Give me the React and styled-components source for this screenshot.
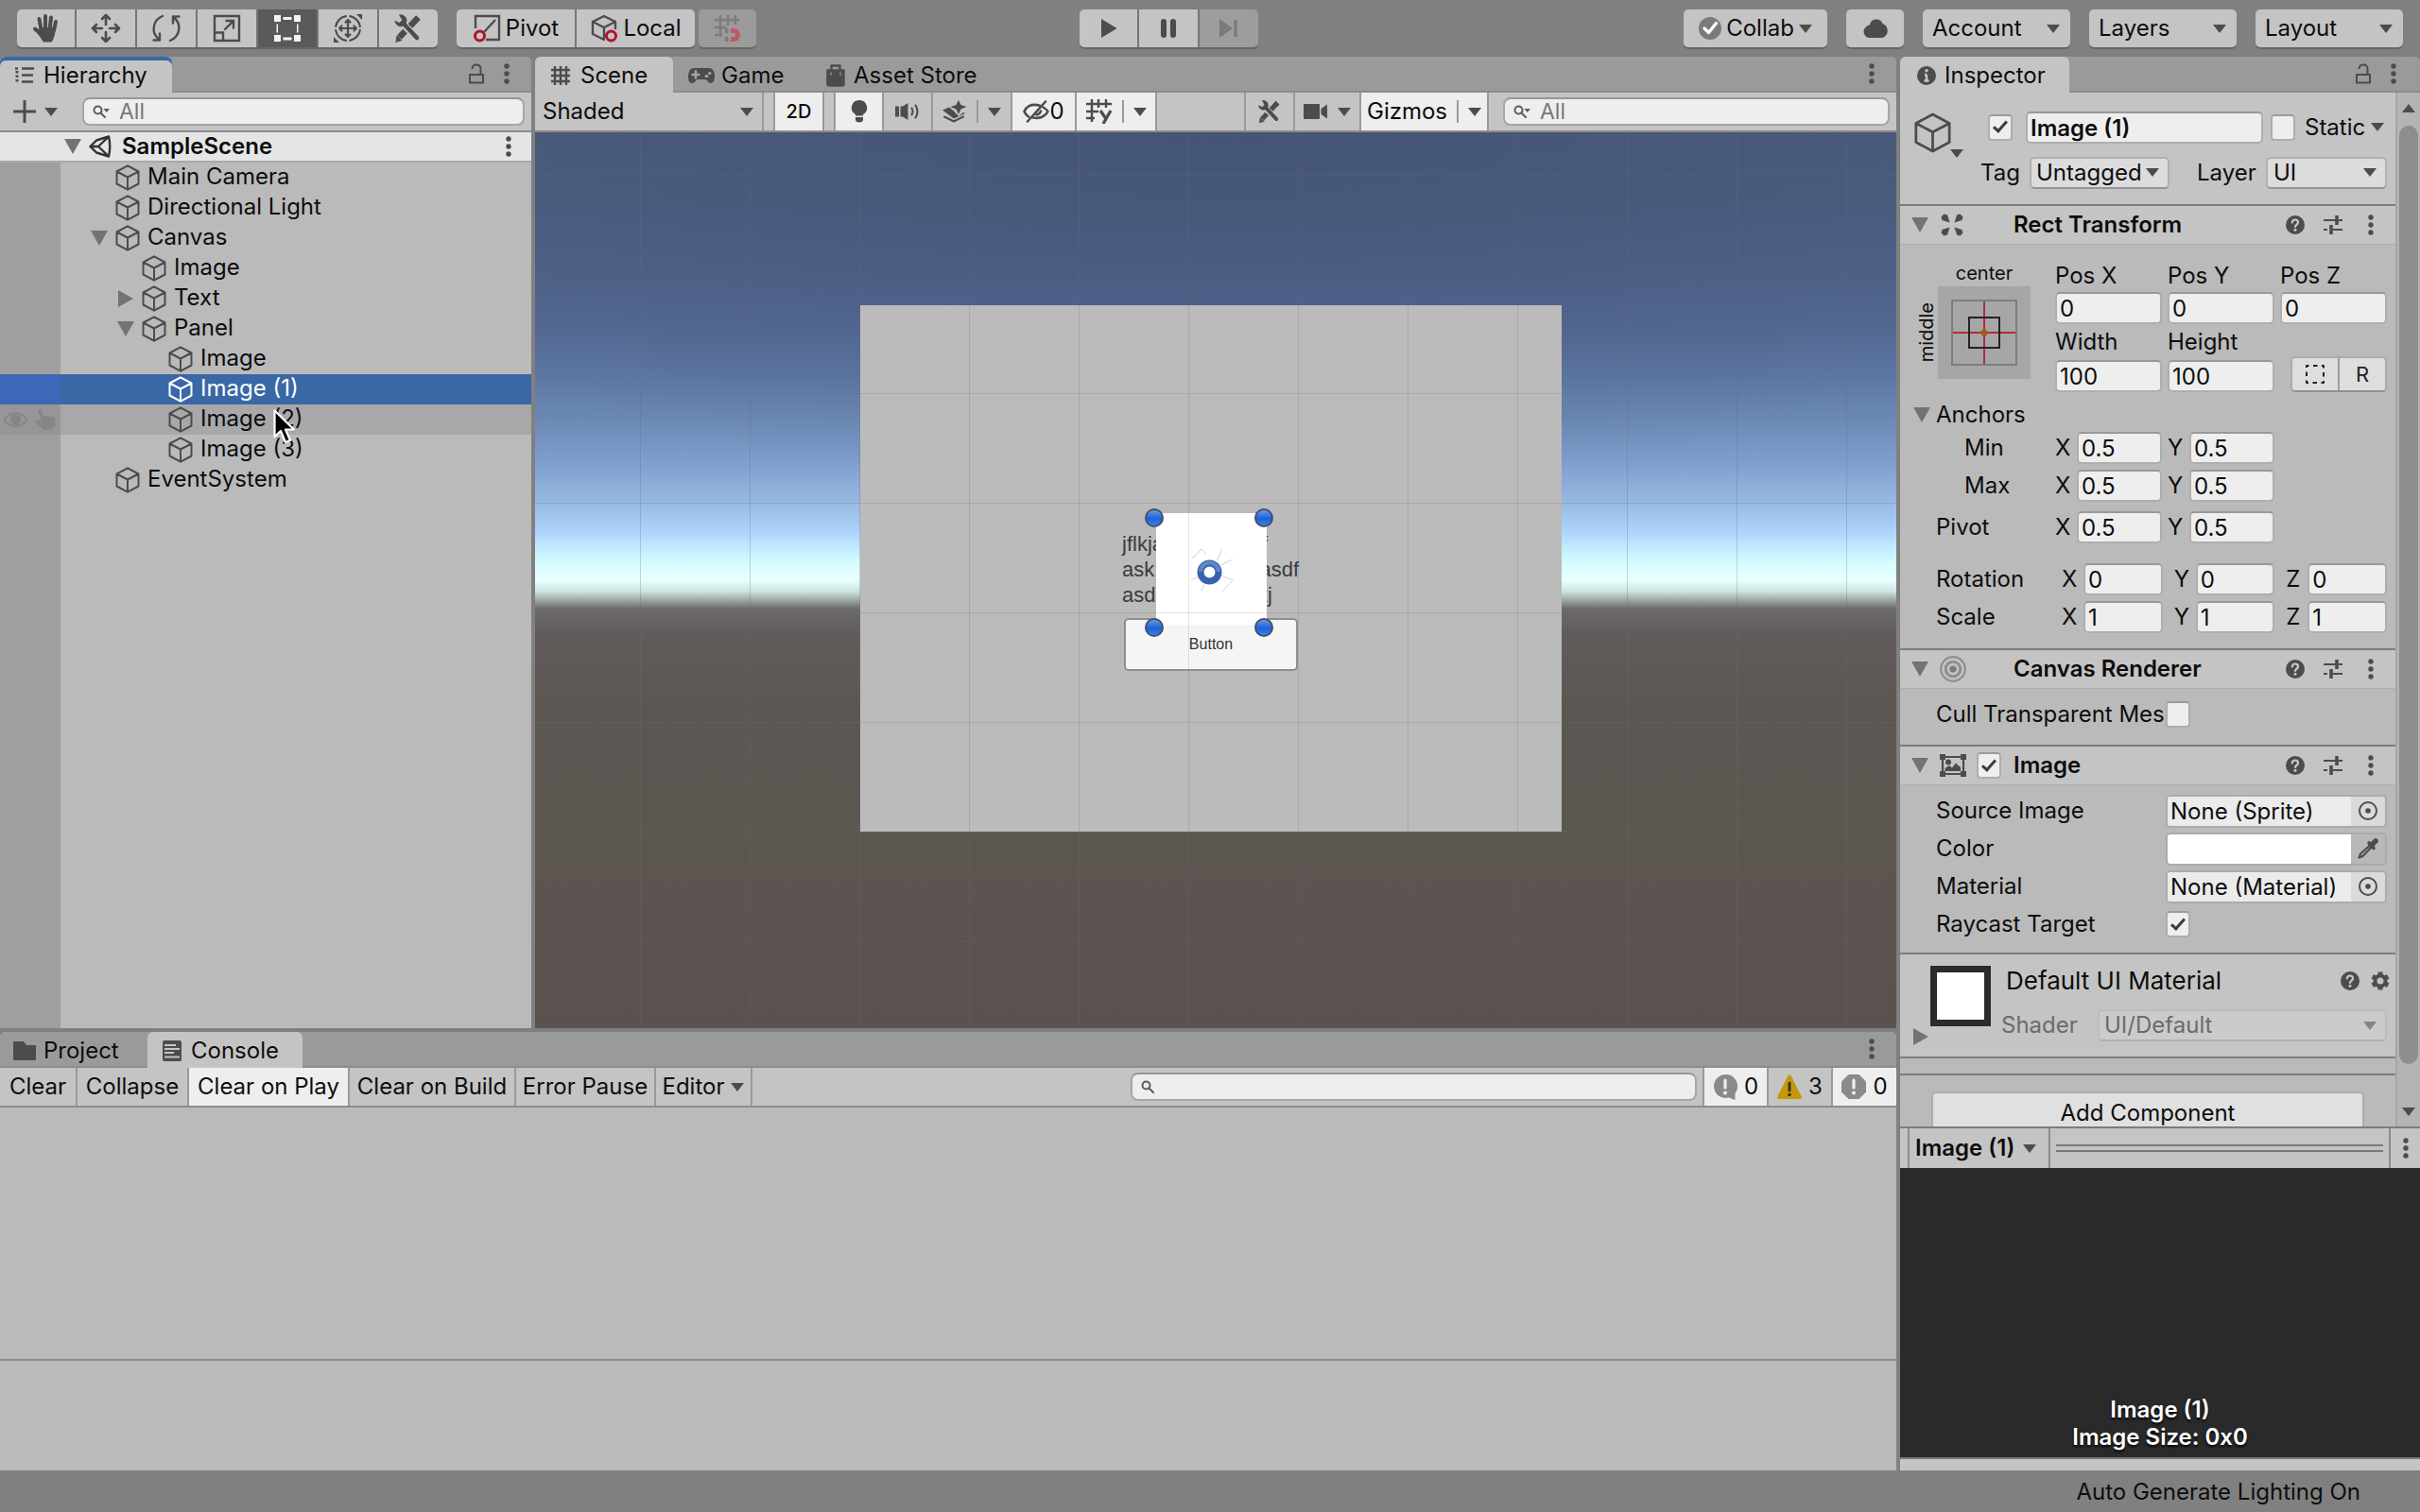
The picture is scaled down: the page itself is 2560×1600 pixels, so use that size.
import React from "react";
import styled, { createGlobalStyle, css } from "styled-components";

const c = {
  frame: "#808080",
  bar: "#c4c4c4",
  body: "#bababa",
  tabs: "#9a9a9a",
  line: "#8c8c8c",
  rule: "#7d7d7d",
  field: "#eeeeee",
  icon: "#4c4c4c",
  text: "#0d0d0d",
  blue: "#3a67a6",
  red: "#b5122c",
};

const GlobalStyle = createGlobalStyle`
  *, *::before, *::after { box-sizing: border-box; }
  body { margin: 0; background: ${c.frame}; }
  body, button, input, select {
    font-family: Inter, "Liberation Sans", sans-serif;
    font-size: 24px;
    line-height: 30px;
    color: ${c.text};
  }
  button, input, select { margin: 0; padding: 0; border: 0; background: none; border-radius: 0; }
  svg { display: block; flex: none; }
`;

/* ---------- icons ---------- */

const Glyph = ({ w, h, children, color = c.icon, sw = 2.4, vb }) => (
  <svg
    width={w}
    height={h}
    viewBox={vb || `0 0 ${w} ${h}`}
    fill="none"
    stroke={color}
    strokeWidth={sw}
    strokeLinecap="round"
    strokeLinejoin="round"
    aria-hidden="true"
  >
    {children}
  </svg>
);

const Down = ({ w = 14, h = 9, color = c.icon }) => (
  <Glyph w={w} h={h} vb="0 0 14 9" sw="0">
    <path d="M0 0H14L7 9Z" fill={color} />
  </Glyph>
);
const Up = () => (
  <Glyph w={14} h={9} sw="0">
    <path d="M0 9H14L7 0Z" fill={c.icon} />
  </Glyph>
);
const FoldOpen = () => (
  <Glyph w={18} h={16} sw="0">
    <path d="M0 0H18L9 16Z" fill="#737373" />
  </Glyph>
);
const FoldClosed = () => (
  <Glyph w={16} h={18} sw="0">
    <path d="M0 0V18L16 9Z" fill="#737373" />
  </Glyph>
);
const Dots = () => (
  <Glyph w={6} h={22} sw="0">
    {[3, 11, 19].map((y) => (
      <circle key={y} cx="3" cy={y} r="2.7" fill={c.icon} />
    ))}
  </Glyph>
);
const Cube = ({ w = 26, h = 28, color = c.icon, sw = 2 }) => (
  <Glyph w={w} h={h} vb="0 0 26 28" color={color} sw={sw}>
    <path d="M13 1.3L24.5 7.5V20.5L13 26.7L1.500 20.5V7.500ZM1.500 7.500L13 13.500L24.500 7.500M13 13.500V26.700" />
  </Glyph>
);
const Lock = () => (
  <Glyph w={18} h={22} sw="2">
    <path d="M2 12H16V20.500H2Z" strokeLinejoin="miter" />
    <path d="M4.500 6V5.500Q5 1.500 9 1.500Q13.500 1.500 13.500 6V12" strokeLinecap="butt" />
  </Glyph>
);
const HandTool = () => (
  <Glyph w={30} h={32} sw="4">
    <path d="M9.500 17L7.500 6M14 15V3M18.800 15L20 4.500M23 18L25 9M8 21L3 16.500" />
    <path d="M8 16L24 15.500C24.500 22 22.500 26 20.500 30H12C10 26.500 7 23 5.500 20Z" fill={c.icon} strokeWidth="1" />
  </Glyph>
);
const MoveTool = () => (
  <Glyph w={32} h={32} sw="2.600">
    <path d="M16 12V2M12 6L16 2L20 6M16 20V30M12 26L16 30L20 26M12 16H2M6 12L2 16L6 20M20 16H30M26 12L30 16L26 20" />
  </Glyph>
);
const RotateTool = () => (
  <Glyph w={32} h={32} sw="2.400">
    <path d="M12 3C2 7 -1 20 8 27.500M2.500 28.500H9V21.500M20 29C30 25 33 12 24 4.500M29.500 3.500H23V10.500" />
  </Glyph>
);
const ScaleTool = () => (
  <Glyph w={30} h={30} sw="2.400">
    <path d="M2 2H28V28H2ZM2 19.500H11V28M13 16L21.500 7.500M14.500 7H22V14.500" strokeLinejoin="miter" />
  </Glyph>
);
const RectTool = () => (
  <Glyph w={30} h={30} color="#f4f4f4" sw="0">
    <path d="M1 1H8V8H1ZM22 1H29V8H22ZM1 22H8V29H1ZM22 22H29V29H22ZM10.500 3H19.500V6H10.500ZM10.500 24.500H19.500V27.500H10.500ZM3.500 10.500H5V19.500H3.500ZM25 10.500H26.500V19.500H25Z" fill="#f4f4f4" />
  </Glyph>
);
const TransformTool = () => (
  <Glyph w={34} h={34} sw="2.200">
    <circle cx="17" cy="17" r="13" strokeDasharray="16 4.400" strokeDashoffset="-2" />
    <path d="M17 8V26M14.500 10.500L17 8L19.500 10.500M14.500 23.500L17 26L19.500 23.500M8 17H26M10.500 14.500L8 17L10.500 19.500M23.500 14.500L26 17L23.500 19.500" />
    <path d="M26 2H32V8ZM2 26V32H8Z" fill={c.icon} strokeWidth="0" />
  </Glyph>
);
const ToolsIcon = ({ s = 32 }) => (
  <Glyph w={s} h={s} vb="0 0 32 32" sw="4">
    <path d="M10.500 10.500L25 26" strokeWidth="4.600" />
    <path d="M7 1.800A6 6 0 1 1 2 8.500L6.500 10.500L9.500 7.500Z" fill={c.icon} strokeWidth="1" />
    <path d="M26.500 4.500L18 13.500M12.500 19L6.500 25.500" strokeWidth="6.500" strokeLinecap="butt" />
    <path d="M3 30L4 24L8.500 28.500Z" fill={c.icon} strokeWidth="1" />
  </Glyph>
);
const PivotIcon = () => (
  <Glyph w={30} h={30}>
    <path d="M3 15V2H28V27H14M12 19L24 6" strokeLinecap="butt" strokeLinejoin="miter" />
    <circle cx="7.500" cy="23" r="5" stroke={c.red} strokeWidth="3" />
  </Glyph>
);
const LocalIcon = () => (
  <Glyph w={30} h={30}>
    <path d="M15 27L3 21V8L15 2L27 8V15M3 8L15 14L27 8M15 14V26" />
    <circle cx="22.500" cy="23" r="5" stroke={c.red} strokeWidth="3" />
  </Glyph>
);
const SnapIcon = () => (
  <Glyph w={30} h={30} color="#7c7c7c">
    <path d="M7 1V24M15 1V12M23 1V11M1 6H27M1 14H13M1 22H9" strokeLinecap="butt" />
    <path d="M18 17.500H21A4.500 4.500 0 0 1 21 26.500H18" stroke="#c25964" strokeWidth="5" strokeLinecap="butt" />
    <path d="M12 17.500H15.500M12 26.500H15.500" strokeWidth="5" strokeLinecap="butt" />
  </Glyph>
);
const PlayIcon = () => (
  <Glyph w={18} h={20} sw="0">
    <path d="M1 0L17.500 10L1 20Z" fill={c.icon} />
  </Glyph>
);
const PauseIcon = () => (
  <Glyph w={18} h={20} sw="6">
    <path d="M4 3V17M14 3V17" />
  </Glyph>
);
const StepIcon = () => (
  <Glyph w={20} h={20} color="#7b7b7b" sw="3.500">
    <path d="M0 0L14 10L0 20Z" fill="#7b7b7b" strokeWidth="0" />
    <path d="M17 1V19" strokeLinecap="butt" />
  </Glyph>
);
const CollabIcon = () => (
  <Glyph w={24} h={24} sw="0">
    <circle cx="12" cy="12" r="12" fill="#7a7a7a" />
    <path d="M6 12L10.500 16.500L18.500 6.500" stroke="#fff" strokeWidth="3.400" />
  </Glyph>
);
const CloudIcon = () => (
  <Glyph w={28} h={22} sw="0">
    <path d="M7 21A6.500 6.500 0 0 1 4 9.500A5 5 0 0 1 8 7.500A7 7 0 0 1 21.500 6A8 8 0 0 1 21.500 21Z" fill={c.icon} />
  </Glyph>
);
const HierarchyIcon = () => (
  <Glyph w={22} h={18} sw="2.400">
    <path d="M1 1.500H4M8 1.500H21M8 8.500H20M8 15.500H20" strokeLinecap="butt" />
    <path d="M3 4V17" strokeDasharray="2.500 2" strokeLinecap="butt" strokeWidth="3" />
  </Glyph>
);
const SceneIcon = () => (
  <Glyph w={22} h={22} sw="2.400">
    <path d="M5 1V21M11 1V21M17 1V21M1 5H21M1 11H21M1 17H21" strokeLinecap="butt" />
  </Glyph>
);
const GameIcon = () => (
  <Glyph w={28} h={16} sw="0">
    <path d="M6 0H22C26 0 28 4 28 9C28 14 26 16 24 16C21 16 20 12 17.500 12H10.500C8 12 7 16 4 16C2 16 0 14 0 9C0 4 2 0 6 0Z" fill={c.icon} />
    <path d="M8 3.500V10.500M4.500 7H11.500" stroke="#a5a5a5" strokeWidth="2.400" />
    <path d="M19 8.500H20M22.500 5.500H23" stroke="#a5a5a5" strokeWidth="3" />
  </Glyph>
);
const StoreIcon = () => (
  <Glyph w={20} h={24} sw="2.400">
    <path d="M5.500 6V1.500H14.500V6" />
    <path d="M1 6H19V21C19 22 18 23 17 23H3C2 23 1 22 1 21Z" fill={c.icon} strokeWidth="1.500" />
    <path d="M5 9V11M15 9V11" stroke="#8a8a8a" strokeWidth="1.600" />
  </Glyph>
);
const InfoIcon = () => (
  <Glyph w={20} h={20} sw="0">
    <circle cx="10" cy="10" r="10" fill={c.icon} />
    <path d="M10 9V15M8 9H10M7.500 15.500H12.500" stroke="#c8c8c8" strokeWidth="2.400" strokeLinecap="butt" />
    <circle cx="10" cy="4.800" r="1.700" fill="#c8c8c8" />
  </Glyph>
);
const FolderIcon = () => (
  <Glyph w={24} h={20} sw="0">
    <path d="M0 1Q0 0 1 0H11L14 4H23Q24 4 24 5V19Q24 20 23 20H1Q0 20 0 19Z" fill={c.icon} />
  </Glyph>
);
const ConsoleIcon = () => (
  <Glyph w={20} h={22} sw="0">
    <rect width="20" height="22" rx="2" fill={c.icon} />
    <path d="M2 5H14M2 9H18M2 13H12M2 17.500H18" stroke="#c6c6c6" strokeWidth="1.800" strokeLinecap="butt" />
  </Glyph>
);
const PlusIcon = () => (
  <Glyph w={24} h={24} sw="3">
    <path d="M12 0V24M0 12H24" strokeLinecap="butt" />
  </Glyph>
);
const FilterSearchIcon = () => (
  <Glyph w={18} h={14} color="#5c5c5c" sw="2">
    <circle cx="5.500" cy="5.500" r="4" />
    <path d="M8.500 8.500L13 13" />
    <path d="M11.500 4H18L14.750 8Z" fill="#5c5c5c" strokeWidth="0" />
  </Glyph>
);
const SearchIcon = () => (
  <Glyph w={14} h={14} color="#5c5c5c" sw="2">
    <circle cx="5.500" cy="5.500" r="4" />
    <path d="M8.500 8.500L13 13" />
  </Glyph>
);
const UnityIcon = () => (
  <Glyph w={24} h={24} sw="2.400" color="#333">
    <path d="M21 1.500L8 5.500L1.500 12L8 18.500L21 22.500C22.500 16 22.500 8 21 1.500ZM10 12H1.500M10 12L20 2.500M10 12L20 21.500" />
  </Glyph>
);
const EyeIcon = () => (
  <Glyph w={27} h={18} color="#868686" sw="2.200">
    <path d="M1.500 9C7 0 20 0 25.500 9C20 18 7 18 1.500 9Z" />
    <circle cx="13.500" cy="9" r="4.500" fill="#868686" />
  </Glyph>
);
const PickIcon = () => (
  <Glyph w={24} h={22} color="#868686" sw="3.400">
    <path d="M6 2L10 12" />
    <path d="M10 8L21 9L22 17L17 21H11L2 13L8 13Z" fill="#868686" strokeWidth="2" />
  </Glyph>
);
const CursorIcon = () => (
  <Glyph w={24} h={37} color="#fff" sw="2.200">
    <path d="M1.500 1.500V29L8 23L13 35L18 33L13 21.500H22Z" fill="#000" />
  </Glyph>
);
const BulbIcon = () => (
  <Glyph w={18} h={24} sw="0">
    <path d="M9 0A8 8 0 0 1 13 15V16.500H5V15A8 8 0 0 1 9 0ZM5 18H13V20.500Q13 23.500 9 23.500Q5 23.500 5 20.500Z" fill={c.icon} />
  </Glyph>
);
const AudioIcon = () => (
  <Glyph w={26} h={18} sw="2">
    <path d="M0 3.500H4V14.500H0Z" fill={c.icon} strokeWidth="0" />
    <path d="M5.500 3.500H8L13.500 0V18L8 14.500H5.500Z" fill={c.icon} strokeWidth="0" />
    <path d="M17.500 5.500Q19.500 9 17.500 12.500M21.500 2.500Q25.500 9 21.500 15.500" />
  </Glyph>
);
const EffectsIcon = () => (
  <Glyph w={26} h={24} sw="2">
    <path d="M17 0L19.500 5L25.500 7L19.500 9.500L17 15L14.500 9.500L8.500 7L14.500 5Z" fill={c.icon} strokeWidth="0" />
    <path d="M0 10.500L7 7.500L12 11.500L17 17L22 13L24 14L12 19.500Z" fill={c.icon} strokeWidth="0" />
    <path d="M2 17.500L12 22.500L22 17.500" />
  </Glyph>
);
const HiddenIcon = () => (
  <Glyph w={28} h={24} sw="2.600">
    <path d="M18.500 6C8 2.500 3 8 1.500 12C2.500 14.500 4 16 6 17.500M21.500 7.500C24 9 26 11 26.500 12C24 17 18 20 11 18.500M24 1.500L5 22.500M19 11.500Q18 15 14.500 15.500" />
  </Glyph>
);
const GridYIcon = () => (
  <Glyph w={28} h={26} sw="2.400">
    <path d="M6 0V24M13 0V9M21 0V9M0 5H27M0 13H13M0 20H9" strokeLinecap="butt" />
    <path d="M15 12L20.500 20M26 12L18 26" strokeLinecap="butt" strokeWidth="3.200" />
  </Glyph>
);
const CameraIcon = () => (
  <Glyph w={26} h={16} sw="0">
    <path d="M1 0H16Q17 0 17 1V15Q17 16 16 16H1Q0 16 0 15V1Q0 0 1 0ZM18.500 5L25 0.500V15.500L18.500 11Z" fill={c.icon} />
  </Glyph>
);
const RectTransformIcon = () => (
  <Glyph w={24} h={24} sw="0">
    {[0, 90, 180, 270].map((r) => (
      <path key={r} transform={`rotate(${r} 12 12)`} d="M0.500 3.500L3.500 0.500L7 1.500L9.500 9.500L1.500 7Z" fill={c.icon} />
    ))}
  </Glyph>
);
const RendererIcon = () => (
  <Glyph w={32} h={28} color="#8e8e8e" sw="2.200">
    <circle cx="16" cy="14" r="12.800" />
    <circle cx="16" cy="14" r="7.800" strokeWidth="3" />
    <circle cx="16" cy="14" r="3.600" fill="#7c7c7c" strokeWidth="0" />
  </Glyph>
);
const ImageIcon = () => (
  <Glyph w={28} h={24} sw="2.200">
    <path d="M3 3H25V21H3Z" />
    <path d="M0 0H6V6H0ZM22 0H28V6H22ZM0 18H6V24H0ZM22 18H28V24H22ZM5.500 18V15L10 12L13 14.500L17 9.500L22 14V18Z" fill={c.icon} strokeWidth="0" />
    <circle cx="9" cy="8.500" r="3" fill={c.icon} strokeWidth="0" />
  </Glyph>
);
const HelpIcon = () => (
  <Glyph w={20} h={20} sw="0">
    <circle cx="10" cy="10" r="10" fill={c.icon} />
    <path d="M6.800 7.500Q7 4.500 10 4.500T13 7.300Q13 8.800 11.500 9.700T10 12" stroke="#c8c8c8" strokeWidth="2.200" />
    <circle cx="10" cy="15.300" r="1.500" fill="#c8c8c8" />
  </Glyph>
);
const PresetIcon = () => (
  <Glyph w={20} h={20} sw="2">
    <path d="M0 5H13M16 5H20M0 15H4M10 15H20" strokeLinecap="butt" />
    <path d="M14 0V10M8 10V20" strokeWidth="3.600" strokeLinecap="butt" />
  </Glyph>
);
const GearIcon = () => (
  <Glyph w={20} h={20} sw="3.600">
    <circle cx="10" cy="10" r="5.500" strokeWidth="4" />
    {[0, 60, 120, 180, 240, 300].map((r) => (
      <path key={r} d="M10 3.500V0.500" transform={`rotate(${r} 10 10)`} strokeWidth="5" strokeLinecap="butt" />
    ))}
  </Glyph>
);
const PickerIcon = () => (
  <Glyph w={20} h={20} sw="2">
    <circle cx="10" cy="10" r="9" />
    <circle cx="10" cy="10" r="2.800" fill={c.icon} strokeWidth="0" />
  </Glyph>
);
const DropperIcon = () => (
  <Glyph w={22} h={22} sw="2.200">
    <path d="M12.500 8L3 16.500L1.500 20.500L5.500 19L14 10" />
    <path d="M12 5L17 10.500" strokeWidth="3.600" />
    <path d="M14.500 7.500L19 3" strokeWidth="5.500" />
  </Glyph>
);
const BlueprintIcon = () => (
  <Glyph w={20} h={20} sw="2" color="#222">
    <rect x="1" y="1" width="18" height="18" strokeDasharray="4.500 4.500" strokeDashoffset="2" strokeLinecap="butt" />
  </Glyph>
);
const BubbleIcon = () => (
  <Glyph w={26} h={27} sw="0">
    <path d="M13 0A12.500 12.500 0 1 0 17 24.500L23.500 27V20A12.500 12.500 0 0 0 13 0Z" fill="#8a8a8a" />
    <path d="M13 6V14" stroke="#eee" strokeWidth="3.200" />
    <circle cx="13" cy="19.500" r="2" fill="#eee" />
  </Glyph>
);
const WarnIcon = () => (
  <Glyph w={26} h={26} sw="0">
    <path d="M11.500 1Q13 -1 14.500 1L26 24Q26 26 24.500 26H1.500Q0 26 0 24Z" fill="#c4990a" />
    <path d="M13 9V17" stroke="#3c3416" strokeWidth="3" />
    <circle cx="13" cy="21.500" r="1.800" fill="#3c3416" />
  </Glyph>
);
const ErrorIcon = () => (
  <Glyph w={26} h={26} sw="0">
    <path d="M7.500 0H18.500L26 7.500V18.500L18.500 26H7.500L0 18.500V7.500Z" fill="#8a8a8a" />
    <path d="M13 6V14" stroke="#eee" strokeWidth="3.200" />
    <circle cx="13" cy="19.500" r="2" fill="#eee" />
  </Glyph>
);

/* ---------- shared parts ---------- */

const Shell = styled.div`
  display: flex;
  flex-direction: column;
  height: 100vh;
  background: ${c.frame};
  white-space: nowrap;
`;
const Spacer = styled.div`
  flex: 1;
`;
const Tabs = styled.div`
  display: flex;
  flex: none;
  height: 38px;
  background: ${c.tabs};
  border-bottom: 2px solid ${c.line};
  border-radius: 6px 6px 0 0;
`;
const Tab = styled.button`
  display: flex;
  align-items: center;
  gap: ${(p) => p.$gap || 10}px;
  width: ${(p) => p.$w}px;
  height: ${(p) => (p.$active ? 38 : 36)}px;
  padding: ${(p) => (p.$active ? 2 : 4)}px 0 0 ${(p) => p.$pad}px;
  background: ${(p) => (p.$active ? c.bar : "none")};
  border-radius: 6px 6px 0 0;
  ${(p) => p.$focus && css`box-shadow: inset 0 4px 0 ${c.blue};`}
`;
const TabTools = styled.div`
  display: flex;
  align-items: center;
  gap: 20px;
  height: 36px;
  padding-right: ${(p) => p.$pad}px;
`;
const IconButton = styled.button`
  display: flex;
  align-items: center;
  justify-content: center;
  width: ${(p) => (p.$w ? p.$w + "px" : "auto")};
`;
const Bar = styled.div`
  display: flex;
  align-items: stretch;
  flex: none;
  height: 42px;
  background: ${c.bar};
  border-bottom: 2px solid ${c.line};
`;
const BarButton = styled.button`
  display: flex;
  align-items: center;
  justify-content: center;
  gap: ${(p) => p.$gap || 0}px;
  width: ${(p) => p.$w}px;
  background: ${(p) => (p.$on ? c.field : "none")};
  border-right: 2px solid #9a9a9a;
  font-weight: ${(p) => p.$weight || 400};
  font-size: ${(p) => p.$size || 24}px;
`;
const Split = styled.span`
  width: 2px;
  height: 24px;
  background: #9a9a9a;
`;
const SearchBox = styled.label`
  display: flex;
  align-items: center;
  gap: ${(p) => p.$gap || 10}px;
  flex: ${(p) => (p.$w ? "none" : 1)};
  width: ${(p) => (p.$w ? p.$w + "px" : "auto")};
  height: 30px;
  margin: ${(p) => p.$m || "5px 7px"};
  padding: 0 9px;
  background: ${c.field};
  border: 2px solid #a6a6a6;
  border-top-color: #979797;
  border-radius: 8px;
`;
const SearchInput = styled.input`
  flex: 1;
  min-width: 0;
  height: 26px;
  outline: none;
  line-height: 26px;
  font-size: 23px;
  &::placeholder { color: #777; opacity: 1; }
`;

/* ---------- main toolbar ---------- */

const TopBar = styled.header`
  display: grid;
  grid-template-columns: 13fr auto 14fr;
  align-items: center;
  flex: none;
  height: 60px;
  padding: 0 18px;
`;
const TopSide = styled.div`
  display: flex;
  gap: ${(p) => p.$gap}px;
  justify-content: ${(p) => (p.$end ? "flex-end" : "flex-start")};
`;
const Group = styled.div`
  display: flex;
  margin-right: ${(p) => p.$mr || 0}px;
  border-radius: 5px;
  overflow: hidden;
  box-shadow: 0 2px 0 #666;
  opacity: ${(p) => (p.$dim ? 0.95 : 1)};
`;
const ToolButton = styled.button`
  display: flex;
  align-items: center;
  justify-content: center;
  gap: 5px;
  width: ${(p) => p.$w || 64}px;
  height: 40px;
  background: ${(p) => (p.$on ? "#5a5a5a" : p.$off ? "#9d9d9d" : "#c4c4c4")};
  & + & { border-left: 2px solid #767676; }
`;
const TopSelect = styled.label`
  display: grid;
  align-items: center;
  width: ${(p) => p.$w || 156}px;
  height: 40px;
  background: #c4c4c4;
  border-radius: 5px;
  box-shadow: 0 2px 0 #666;
  > * { grid-area: 1 / 1; }
  > svg { justify-self: end; margin-right: 11px; pointer-events: none; }
`;
const BareSelect = styled.select`
  appearance: none;
  width: 100%;
  height: 100%;
  padding: 0 24px 0 ${(p) => p.$pad || 10}px;
  outline: none;
  opacity: 1;
  font-weight: ${(p) => p.$weight || 400};
  color: ${(p) => p.$color || c.text};
`;

/* ---------- layout ---------- */

const Workspace = styled.main`
  display: flex;
  flex: 1;
  min-height: 0;
  gap: 4px;
`;
const LeftColumn = styled.div`
  display: flex;
  flex-direction: column;
  flex: 1;
  min-width: 0;
  gap: 4px;
`;
const UpperRow = styled.div`
  display: flex;
  flex: 1;
  min-height: 0;
  gap: 4px;
`;
const Panel = styled.section`
  display: flex;
  flex-direction: column;
  min-width: 0;
  background: ${c.body};
  border-radius: 6px 6px 0 0;
  ${(p) => (p.$w ? css`flex: none; width: ${p.$w}px;` : p.$h ? css`flex: none; height: ${p.$h}px;` : css`flex: 1;`)}
`;

/* ---------- hierarchy ---------- */

const AddButton = styled.button`
  display: flex;
  align-items: center;
  gap: 9px;
  width: 80px;
  padding-left: 14px;
`;
const SceneRow = styled.div`
  display: flex;
  align-items: center;
  flex: none;
  height: 32px;
  padding: 0 21px 0 68px;
  background: #e5e5e5;
  border-bottom: 2px solid #a9a9a9;
  font-weight: 600;
`;
const SceneIconBox = styled.span`
  margin: 0 11px 0 8px;
`;
const Tree = styled.ul`
  flex: 1;
  margin: 0;
  padding: 0;
  list-style: none;
  background: linear-gradient(90deg, #9f9f9f 64px, ${c.body} 64px);
`;
const Item = styled.li`
  position: relative;
  display: flex;
  align-items: center;
  height: 32px;
  color: ${(p) => (p.$selected ? "#fff" : c.text)};
  background: ${(p) =>
    p.$selected
      ? "linear-gradient(90deg, #3b69b8 64px, #3a67a6 64px)"
      : p.$hover
      ? "linear-gradient(90deg, #969696 64px, #a8a8a8 64px)"
      : "none"};
`;
const Gutter = styled.span`
  display: flex;
  align-items: center;
  gap: 6px;
  width: 64px;
  padding-left: 3px;
`;
const FoldSlot = styled.span`
  display: flex;
  justify-content: center;
  width: 22px;
  margin: 0 6px 0 ${(p) => 30 + p.$depth * 28}px;
`;
const ItemName = styled.span`
  margin-left: 8px;
  padding-bottom: 2px;
`;
const Cursor = styled.span`
  position: absolute;
  z-index: 2;
  left: 289px;
  top: 5px;
`;

const items = [
  { name: "Main Camera", depth: 0 },
  { name: "Directional Light", depth: 0 },
  { name: "Canvas", depth: 0, fold: "open" },
  { name: "Image", depth: 1 },
  { name: "Text", depth: 1, fold: "closed" },
  { name: "Panel", depth: 1, fold: "open" },
  { name: "Image", depth: 2 },
  { name: "Image (1)", depth: 2, selected: true },
  { name: "Image (2)", depth: 2, hover: true },
  { name: "Image (3)", depth: 2 },
  { name: "EventSystem", depth: 0 },
];

const Hierarchy = () => (
  <Panel $w={562}>
    <Tabs>
      <Tab $active $focus $w={182} $pad={15} $gap={9}>
        <HierarchyIcon />Hierarchy
      </Tab>
      <Spacer />
      <TabTools $pad={23}>
        <IconButton aria-label="Lock"><Lock /></IconButton>
        <IconButton aria-label="Menu"><Dots /></IconButton>
      </TabTools>
    </Tabs>
    <Bar>
      <AddButton aria-label="Create"><PlusIcon /><Down /></AddButton>
      <SearchBox>
        <FilterSearchIcon />
        <SearchInput placeholder="All" aria-label="Search hierarchy" />
      </SearchBox>
    </Bar>
    <SceneRow>
      <FoldOpen />
      <SceneIconBox><UnityIcon /></SceneIconBox>
      SampleScene
      <Spacer />
      <IconButton aria-label="Scene menu"><Dots /></IconButton>
    </SceneRow>
    <Tree>
      {items.map((it, i) => (
        <Item key={i} $selected={it.selected} $hover={it.hover}>
          <Gutter>{it.hover && <><EyeIcon /><PickIcon /></>}</Gutter>
          <FoldSlot $depth={it.depth}>
            {it.fold === "open" && <FoldOpen />}
            {it.fold === "closed" && <FoldClosed />}
          </FoldSlot>
          <Cube color={it.selected ? "#fff" : c.icon} />
          <ItemName>{it.name}</ItemName>
          {it.hover && <Cursor><CursorIcon /></Cursor>}
        </Item>
      ))}
    </Tree>
  </Panel>
);

/* ---------- scene ---------- */

const ShadeSelect = styled.label`
  display: grid;
  align-items: center;
  width: 242px;
  border-right: 2px solid #9a9a9a;
  > * { grid-area: 1 / 1; }
  > svg { justify-self: end; margin-right: 9px; pointer-events: none; }
`;
const BarGap = styled.span`
  width: ${(p) => p.$w}px;
  border-right: 2px solid #9a9a9a;
`;
const Viewport = styled.div`
  position: relative;
  flex: 1;
  overflow: hidden;
  background:
    radial-gradient(ellipse 75% 40% at 50% 0, rgba(62, 74, 108, 0.4), rgba(62, 74, 108, 0)),
    linear-gradient(
      #4a5c7c 0%, #4b5e80 8%, #4f638a 16%, #546a94 22%, #5d77a3 27%, #6c89b5 32%, #7f9fcd 37%,
      #98bbe4 41.500%, #add2fb 44.500%, #bfe6ff 46%, #d4fcff 48%, #eaffff 50%, #cfe6e2 51.200%,
      #6c6a69 53.200%, #615c5b 56%, #5c5752 64%, #5c5751 78%, #5c5450 85%, #5a524e 100%
    );
`;
const GridLines = styled.div`
  position: absolute;
  inset: 0;
  background:
    linear-gradient(90deg, ${(p) => p.$c} 1px, transparent 1px) 111px 0 / 116px 116px,
    linear-gradient(${(p) => p.$c} 1px, transparent 1px) 0 44px / 116px 116px;
`;
const UiCanvas = styled.div`
  position: absolute;
  left: 344px;
  top: 183px;
  width: 742px;
  height: 557px;
  background: #bbbbbb;
`;
const CanvasText = styled.div`
  position: absolute;
  left: 277px;
  top: 239px;
  font: 22px/27px "Liberation Sans", Arial, sans-serif;
  color: #3b3b3b;
`;
const TextLine = styled.div`
  display: flex;
  justify-content: space-between;
  width: ${(p) => p.$w}px;
`;
const SceneButton = styled.button`
  position: absolute;
  left: 279px;
  top: 331px;
  width: 184px;
  height: 56px;
  background: #f5f5f5;
  border: 2px solid #8e8e8e;
  border-radius: 5px;
  font: 16px/20px "Liberation Sans", Arial, sans-serif;
  color: #323232;
`;
const WhiteImage = styled.div`
  position: absolute;
  left: 313px;
  top: 220px;
  width: 117px;
  height: 118px;
  background: #fff;
`;
const Handle = styled.span`
  position: absolute;
  left: ${(p) => p.$x}px;
  top: ${(p) => p.$y}px;
  width: 20px;
  height: 20px;
  border: 2px solid #44506a;
  border-radius: 50%;
  background: linear-gradient(#6a98e2, #1a63d8 55%, #3a82f2);
`;
const PivotMark = styled.svg`
  position: absolute;
  left: 344px;
  top: 254px;
`;

const Scene = () => (
  <Panel>
    <Tabs>
      <Tab $active $w={146} $pad={16}><SceneIcon />Scene</Tab>
      <Tab $w={144} $pad={16} $gap={7}><GameIcon />Game</Tab>
      <Tab $w={190} $pad={18} $gap={9}><StoreIcon />Asset Store</Tab>
      <Spacer />
      <TabTools $pad={23}><IconButton aria-label="Menu"><Dots /></IconButton></TabTools>
    </Tabs>
    <Bar>
      <ShadeSelect>
        <BareSelect aria-label="Draw mode" $pad={8}><option>Shaded</option></BareSelect>
        <Down />
      </ShadeSelect>
      <BarGap $w={12} />
      <BarButton $w={52} $on $weight={500} $size={20}>2D</BarButton>
      <BarGap $w={12} />
      <BarButton $w={51} $on aria-label="Lighting"><BulbIcon /></BarButton>
      <BarButton $w={52} aria-label="Audio"><AudioIcon /></BarButton>
      <BarButton $w={84} $gap={10} aria-label="Effects"><EffectsIcon /><Split /><Down /></BarButton>
      <BarButton $w={68} $on aria-label="Hidden objects"><HiddenIcon />0</BarButton>
      <BarButton $w={85} $on $gap={10} aria-label="Grid"><GridYIcon /><Split /><Down /></BarButton>
      <Spacer />
      <BarGap $w={2} />
      <BarButton $w={52} aria-label="Tools"><ToolsIcon s={26} /></BarButton>
      <BarButton $w={70} $gap={10} aria-label="Camera"><CameraIcon /><Down /></BarButton>
      <BarButton $w={135} $on $gap={10}>Gizmos<Split /><Down /></BarButton>
      <SearchBox $w={409} $m="5px 7px 5px 15px">
        <FilterSearchIcon />
        <SearchInput placeholder="All" aria-label="Search scene" />
      </SearchBox>
    </Bar>
    <Viewport>
      <GridLines $c="rgba(140,150,170,0.16)" />
      <UiCanvas>
        <CanvasText>
          <TextLine $w={154}><span>jflkja</span><span>f</span></TextLine>
          <TextLine $w={187}><span>ask</span><span>asdf</span></TextLine>
          <TextLine $w={159}><span>asd</span><span>kj</span></TextLine>
        </CanvasText>
        <SceneButton>Button</SceneButton>
        <WhiteImage />
        <PivotMark width="52" height="56" fill="none">
          <path d="M7 14L17 4L22 10M39 4L33 17M50 15L37 21M6 37L17 32M17 48L22 37M38 32L50 37L39 49M7 14L11 11" stroke="#d3d5d9" />
          <circle cx="25.500" cy="28.500" r="9.500" stroke="#3763ae" strokeWidth="7" />
          <path d="M16 28A9.500 9.500 0 0 1 35 28" stroke="#5f87c8" strokeWidth="4" />
        </PivotMark>
      </UiCanvas>
      <GridLines $c="rgba(70,70,70,0.15)" />
      <Handle $x={645} $y={398} />
      <Handle $x={761} $y={398} />
      <Handle $x={645} $y={514} />
      <Handle $x={761} $y={514} />
    </Viewport>
  </Panel>
);

/* ---------- console ---------- */

const CountButton = styled(BarButton)`
  border-right: 0;
  border-left: 2px solid #9a9a9a;
`;
const Log = styled.div`
  flex: 1;
  border-bottom: 2px solid ${c.line};
`;
const LogDetail = styled.div`
  flex: none;
  height: 116px;
`;

const Console = () => (
  <Panel $h={464}>
    <Tabs>
      <Tab $w={156} $pad={14} $gap={8}><FolderIcon />Project</Tab>
      <Tab $active $w={164} $pad={16} $gap={10}><ConsoleIcon />Console</Tab>
      <Spacer />
      <TabTools $pad={23}><IconButton aria-label="Menu"><Dots /></IconButton></TabTools>
    </Tabs>
    <Bar>
      <BarButton $w={82}>Clear</BarButton>
      <BarButton $w={118}>Collapse</BarButton>
      <BarButton $w={170} $on>Clear on Play</BarButton>
      <BarButton $w={176}>Clear on Build</BarButton>
      <BarButton $w={148}>Error Pause</BarButton>
      <BarButton $w={102} $gap={7}>Editor<Down /></BarButton>
      <Spacer />
      <SearchBox $w={599} $m="5px 6px 5px 0">
        <SearchIcon />
        <SearchInput aria-label="Search console" />
      </SearchBox>
      <CountButton $w={68} $on $gap={7}><BubbleIcon />0</CountButton>
      <CountButton $w={68} $gap={7}><WarnIcon />3</CountButton>
      <CountButton $w={69} $on $gap={7}><ErrorIcon />0</CountButton>
    </Bar>
    <Log />
    <LogDetail />
  </Panel>
);

/* ---------- inspector ---------- */

const Scroller = styled.div`
  display: flex;
  flex: 1;
  min-height: 0;
  overflow: hidden;
`;
const Content = styled.div`
  flex: 1;
  min-width: 0;
`;
const ScrollTrack = styled.div`
  display: flex;
  flex-direction: column;
  align-items: center;
  gap: 14px;
  width: 26px;
  padding: 12px 0 11px;
  border-left: 2px solid #a6a6a6;
  background: #b4b4b4;
`;
const Thumb = styled.div`
  flex: 1;
  width: 20px;
  margin-bottom: 32px;
  border-radius: 10px;
  background: #8e8e8e;
`;
const ObjectHead = styled.div`
  display: flex;
  gap: 14px;
  height: 118px;
  padding: 19px 9px 0 14px;
  background: ${c.bar};
`;
const ObjectIcon = styled.button`
  display: flex;
  align-items: flex-start;
  width: 54px;
  height: 54px;
  padding-top: 2px;
  svg + svg { align-self: flex-end; margin-left: -2px; margin-bottom: 4px; }
`;
const HeadRows = styled.div`
  display: flex;
  flex: 1;
  flex-direction: column;
  gap: 13px;
`;
const HeadRow = styled.div`
  display: flex;
  align-items: center;
  height: 35px;
  padding: 0 ${(p) => p.$end || 0}px 0 ${(p) => p.$pad || 0}px;
`;
const Check = styled.input.attrs({ type: "checkbox" })`
  appearance: none;
  display: grid;
  place-items: center;
  flex: none;
  width: 26px;
  height: 28px;
  background: ${c.field};
  border: 2px solid #aeaeae;
  border-top-color: #9b9b9b;
  border-radius: 4px;
  &:checked::before {
    content: "";
    width: 8px;
    height: 15px;
    margin-top: -4px;
    border: solid #3c3c3c;
    border-width: 0 3px 3px 0;
    transform: rotate(42deg);
  }
`;
const TextField = styled.input`
  flex: 1;
  width: 100%;
  min-width: 0;
  height: 34px;
  padding: 1px 4px 0 3px;
  background: ${c.field};
  border: 2px solid #aeaeae;
  border-top-color: #999;
  border-radius: 5px;
  outline: none;
  font-weight: ${(p) => p.$weight || 400};
  margin: ${(p) => p.$m || 0};
`;
const StaticLabel = styled.label`
  width: 70px;
  margin-left: 10px;
`;
const TagLabel = styled.label`
  width: ${(p) => p.$w}px;
`;
const SelectBox = styled.div`
  display: grid;
  align-items: center;
  flex: ${(p) => (p.$w ? "none" : 1)};
  width: ${(p) => (p.$w ? p.$w + "px" : "auto")};
  height: 34px;
  margin-right: ${(p) => p.$mr || 0}px;
  background: ${(p) => (p.$off ? "#cbcbcb" : "#dcdcdc")};
  border: 2px solid ${(p) => (p.$off ? "#bcbcbc" : "#b0b0b0")};
  border-bottom-color: ${(p) => (p.$off ? "#aeaeae" : "#949494")};
  border-radius: 5px;
  > * { grid-area: 1 / 1; }
  > svg { justify-self: end; margin-right: 9px; pointer-events: none; }
`;
const CompHead = styled.div`
  display: flex;
  align-items: center;
  height: 43px;
  padding: 0 16px 0 12px;
  background: ${c.bar};
  border-top: 2px solid ${c.rule};
  border-bottom: 1px solid #adadad;
`;
const CompIcons = styled.div`
  display: flex;
  align-items: center;
  gap: 11px;
  width: 90px;
  padding-left: ${(p) => p.$pad || 10}px;
`;
const CompTitle = styled.h2`
  flex: 1;
  margin: 0;
  font-size: 24px;
  line-height: 30px;
  font-weight: 600;
`;
const CompTools = styled.div`
  display: flex;
  align-items: center;
  gap: 20px;
`;
const RectTop = styled.div`
  display: grid;
  grid-template-columns: 158px repeat(3, 1fr);
  grid-template-rows: 34px 34px 38px 34px;
  column-gap: 6px;
  padding: 16px 9px 0 0;
`;
const AnchorCell = styled.div`
  grid-row: 1 / 5;
  display: grid;
  grid-template-columns: 24px 98px;
  grid-template-rows: 28px 98px;
  align-content: start;
  justify-items: center;
  align-items: center;
  padding-left: 16px;
  font-size: 20px;
`;
const AnchorTop = styled.span`
  grid-column: 2;
`;
const AnchorSide = styled.span`
  writing-mode: vertical-rl;
  transform: rotate(180deg);
`;
const AnchorButton = styled.button`
  display: grid;
  place-items: center;
  width: 98px;
  height: 98px;
  background: #a6a6a6;
`;
const TopLabel = styled.label`
  align-self: center;
`;
const WideLabel = styled(TopLabel)`
  grid-column: ${(p) => p.$col};
  grid-row: 3;
`;
const LowField = styled(TextField)`
  grid-column: ${(p) => p.$col};
  grid-row: 4;
`;
const SizeButtons = styled.div`
  display: flex;
  align-self: end;
  grid-column: 4;
  grid-row: 4;
  height: 38px;
  margin-left: 11px;
  background: #dedede;
  border: 2px solid #ababab;
  border-bottom-color: #8f8f8f;
  border-radius: 5px;
`;
const SizeButton = styled.button`
  display: grid;
  place-items: center;
  flex: 1;
  font-size: 22px;
  color: #222;
  & + & { border-left: 2px solid #a0a0a0; }
`;
const Rows = styled.div`
  display: flex;
  flex-direction: column;
  gap: 6px;
  padding: ${(p) => p.$pad};
`;
const Row = styled.div`
  display: flex;
  align-items: center;
  height: 34px;
  margin-top: ${(p) => p.$mt || 0}px;
`;
const RowName = styled.span`
  flex: none;
  width: ${(p) => p.$w || 126}px;
  padding-left: ${(p) => p.$indent || 0}px;
`;
const FoldName = styled.div`
  display: flex;
  align-items: center;
  gap: 6px;
  height: 34px;
  margin: 7px 0 1px;
  padding-left: 14px;
`;
const Axes = styled.div`
  display: grid;
  flex: 1;
  grid-template-columns: repeat(3, 1fr);
  column-gap: ${(p) => p.$gap}px;
  padding-left: ${(p) => p.$pad || 0}px;
`;
const Axis = styled.label`
  display: grid;
  align-items: center;
  grid-template-columns: 23px 1fr;
`;
const FieldName = styled.label`
  flex: none;
  width: 243px;
`;
const ObjectField = styled.div`
  display: flex;
  flex: 1;
  height: 35px;
  background: #dadada;
  border: 2px solid #ababab;
  border-radius: 5px;
  overflow: hidden;
`;
const ObjectValue = styled.input`
  flex: 1;
  min-width: 0;
  height: 31px;
  padding: 1px 0 0 3px;
  background: #ebebeb;
  outline: none;
`;
const ObjectPick = styled.button`
  display: grid;
  place-items: center;
  width: 36px;
`;
const ColorField = styled(ObjectField)`
  background: #b8b8b8;
`;
const ColorSwatch = styled.button`
  flex: 1;
  background: #fff;
`;
const MaterialHead = styled.div`
  display: flex;
  height: 112px;
  padding: 0 6px 0 14px;
  background: ${c.bar};
  border-top: 2px solid ${c.rule};
  border-bottom: 2px solid ${c.rule};
`;
const MaterialFold = styled.div`
  display: flex;
  align-items: flex-end;
  width: 18px;
  padding-bottom: 12px;
`;
const MaterialThumb = styled.div`
  width: 64px;
  height: 64px;
  margin-top: 12px;
  background: #fff;
  border: 7px solid #2b2b2b;
`;
const MaterialInfo = styled.div`
  display: flex;
  flex: 1;
  flex-direction: column;
  gap: 15px;
  padding: 13px 0 0 11px;
`;
const MaterialTitle = styled.div`
  display: flex;
  align-items: center;
  gap: 12px;
  height: 30px;
  padding-left: 5px;
  font-size: 26px;
`;
const ShaderRow = styled.div`
  display: flex;
  align-items: center;
  padding-right: 3px;
  color: #6b6b6b;
`;
const FooterGap = styled.div`
  height: 18px;
  border-bottom: 2px solid ${c.rule};
`;
const AddComponent = styled.button`
  display: block;
  width: calc(100% - 66px);
  height: 46px;
  margin: 17px 33px 0;
  background: #e0e0e0;
  border: 2px solid #adadad;
  border-radius: 5px;
`;
const PreviewBar = styled.div`
  display: flex;
  flex: none;
  align-items: stretch;
  height: 44px;
  padding-left: 8px;
  background: ${c.bar};
  border-top: 2px solid ${c.rule};
`;
const PreviewName = styled.button`
  display: flex;
  align-items: center;
  gap: 9px;
  width: 151px;
  padding-left: 6px;
  border-left: 2px solid ${c.line};
  border-right: 2px solid ${c.line};
  font-weight: 600;
`;
const DragLines = styled.div`
  flex: 1;
  align-self: center;
  height: 8px;
  margin: 0 6px;
  border-top: 2px solid #7a7a7a;
  border-bottom: 2px solid #7a7a7a;
`;
const PreviewMenu = styled.button`
  display: grid;
  place-items: center;
  width: 33px;
  border-left: 2px solid ${c.line};
`;
const Preview = styled.div`
  display: flex;
  flex: none;
  flex-direction: column;
  justify-content: flex-end;
  align-items: center;
  height: 308px;
  padding-bottom: 7px;
  background: #2a2a2a;
  border-bottom: 2px solid #777;
  font-weight: 600;
  line-height: 29px;
  color: #fff;
  text-shadow: 0 2px 3px #000;
`;
const PreviewFoot = styled.div`
  flex: none;
  height: 12px;
  background: ${c.bar};
`;

const Component = ({ icon, title, checked, pad, children }) => (
  <>
    <CompHead>
      <FoldOpen />
      <CompIcons $pad={pad}>
        {icon}
        {checked && <Check defaultChecked aria-label={`${title} enabled`} />}
      </CompIcons>
      <CompTitle>{title}</CompTitle>
      <CompTools>
        <IconButton aria-label="Help"><HelpIcon /></IconButton>
        <IconButton aria-label="Presets"><PresetIcon /></IconButton>
        <IconButton aria-label="Menu" $w={20}><Dots /></IconButton>
      </CompTools>
    </CompHead>
    {children}
  </>
);

const AxisFields = ({ values, gap = 6, pad }) => (
  <Axes $gap={gap} $pad={pad}>
    {values.map((v, i) => (
      <Axis key={i}>{"XYZ"[i]}<TextField defaultValue={v} /></Axis>
    ))}
  </Axes>
);

const Inspector = () => (
  <Panel $w={550}>
    <Tabs>
      <Tab $active $w={179} $pad={18} $gap={9}><InfoIcon />Inspector</Tab>
      <Spacer />
      <TabTools $pad={25}>
        <IconButton aria-label="Lock"><Lock /></IconButton>
        <IconButton aria-label="Menu"><Dots /></IconButton>
      </TabTools>
    </Tabs>
    <Scroller>
      <Content>
        <ObjectHead>
          <ObjectIcon aria-label="Object icon"><Cube w={41} h={43} sw={1.8} /><Down /></ObjectIcon>
          <HeadRows>
            <HeadRow $pad={11} $end={3}>
              <Check defaultChecked aria-label="Active" />
              <TextField defaultValue="Image (1)" aria-label="Name" $weight={600} $m="0 8px 0 14px" />
              <Check id="static" />
              <StaticLabel htmlFor="static">Static</StaticLabel>
              <Down />
            </HeadRow>
            <HeadRow $pad={3}>
              <TagLabel htmlFor="tag" $w={52}>Tag</TagLabel>
              <SelectBox $w={148} $mr={29}>
                <BareSelect id="tag" $pad={5}><option>Untagged</option></BareSelect>
                <Down />
              </SelectBox>
              <TagLabel htmlFor="layer" $w={73}>Layer</TagLabel>
              <SelectBox>
                <BareSelect id="layer" $pad={6}><option>UI</option></BareSelect>
                <Down />
              </SelectBox>
            </HeadRow>
          </HeadRows>
        </ObjectHead>

        <Component title="Rect Transform" icon={<RectTransformIcon />} pad={13}>
          <RectTop>
            <AnchorCell>
              <AnchorTop>center</AnchorTop>
              <AnchorSide>middle</AnchorSide>
              <AnchorButton aria-label="Anchor presets">
                <svg width="70" height="70" fill="none" strokeWidth="2">
                  <rect x="1" y="1" width="68" height="68" stroke="#7d7d7d" />
                  <path d="M35 2V68M2 35H68" stroke="#b02a3c" />
                  <rect x="19" y="19" width="32" height="32" stroke="#222" />
                  <rect x="32" y="32" width="6" height="6" fill="#96640c" />
                </svg>
              </AnchorButton>
            </AnchorCell>
            <TopLabel htmlFor="px">Pos X</TopLabel>
            <TopLabel htmlFor="py">Pos Y</TopLabel>
            <TopLabel htmlFor="pz">Pos Z</TopLabel>
            <TextField id="px" defaultValue="0" />
            <TextField id="py" defaultValue="0" />
            <TextField id="pz" defaultValue="0" />
            <WideLabel htmlFor="w" $col={2}>Width</WideLabel>
            <WideLabel htmlFor="h" $col={3}>Height</WideLabel>
            <LowField id="w" defaultValue="100" $col={2} />
            <LowField id="h" defaultValue="100" $col={3} />
            <SizeButtons>
              <SizeButton aria-label="Blueprint mode"><BlueprintIcon /></SizeButton>
              <SizeButton aria-label="Raw edit mode">R</SizeButton>
            </SizeButtons>
          </RectTop>
          <FoldName><FoldOpen />Anchors</FoldName>
          <Rows $pad="0 9px 16px 38px">
            <Row><RowName $indent={30}>Min</RowName><AxisFields values={["0.5", "0.5"]} /></Row>
            <Row><RowName $indent={30}>Max</RowName><AxisFields values={["0.5", "0.5"]} /></Row>
            <Row $mt={4}><RowName>Pivot</RowName><AxisFields values={["0.5", "0.5"]} /></Row>
            <Row $mt={15}><RowName>Rotation</RowName><AxisFields values={["0", "0", "0"]} gap={12} pad={7} /></Row>
            <Row><RowName>Scale</RowName><AxisFields values={["1", "1", "1"]} gap={12} pad={7} /></Row>
          </Rows>
        </Component>

        <Component title="Canvas Renderer" icon={<RendererIcon />}>
          <Rows $pad="10px 9px 15px 38px">
            <Row><FieldName htmlFor="cull">Cull Transparent Mes</FieldName><Check id="cull" /></Row>
          </Rows>
        </Component>

        <Component title="Image" icon={<ImageIcon />} checked pad={12}>
          <Rows $pad="10px 9px 13px 38px">
            <Row>
              <FieldName htmlFor="src">Source Image</FieldName>
              <ObjectField>
                <ObjectValue id="src" defaultValue="None (Sprite)" />
                <ObjectPick aria-label="Pick sprite"><PickerIcon /></ObjectPick>
              </ObjectField>
            </Row>
            <Row>
              <FieldName htmlFor="col">Color</FieldName>
              <ColorField>
                <ColorSwatch id="col" />
                <ObjectPick aria-label="Pick color"><DropperIcon /></ObjectPick>
              </ColorField>
            </Row>
            <Row>
              <FieldName htmlFor="mat">Material</FieldName>
              <ObjectField>
                <ObjectValue id="mat" defaultValue="None (Material)" />
                <ObjectPick aria-label="Pick material"><PickerIcon /></ObjectPick>
              </ObjectField>
            </Row>
            <Row><FieldName htmlFor="ray">Raycast Target</FieldName><Check id="ray" defaultChecked /></Row>
          </Rows>
        </Component>

        <MaterialHead>
          <MaterialFold><FoldClosed /></MaterialFold>
          <MaterialThumb />
          <MaterialInfo>
            <MaterialTitle>
              Default UI Material
              <Spacer />
              <IconButton aria-label="Help"><HelpIcon /></IconButton>
              <IconButton aria-label="Settings"><GearIcon /></IconButton>
            </MaterialTitle>
            <ShaderRow>
              <TagLabel htmlFor="shader" $w={102}>Shader</TagLabel>
              <SelectBox $off>
                <BareSelect id="shader" $pad={5} $color="#6b6b6b" disabled><option>UI/Default</option></BareSelect>
                <Down color="#858585" />
              </SelectBox>
            </ShaderRow>
          </MaterialInfo>
        </MaterialHead>
        <FooterGap />
        <AddComponent>Add Component</AddComponent>
      </Content>
      <ScrollTrack><Up /><Thumb /><Down /></ScrollTrack>
    </Scroller>
    <PreviewBar>
      <PreviewName>Image (1)<Down /></PreviewName>
      <DragLines />
      <PreviewMenu aria-label="Preview menu"><Dots /></PreviewMenu>
    </PreviewBar>
    <Preview>
      <div>Image (1)</div>
      <div>Image Size: 0x0</div>
    </Preview>
    <PreviewFoot />
  </Panel>
);

const Status = styled.footer`
  display: flex;
  flex: none;
  align-items: center;
  justify-content: flex-end;
  height: 44px;
  padding: 2px 63px 0 0;
`;

export default function App() {
  return (
    <Shell>
      <GlobalStyle />
      <TopBar>
        <TopSide $gap={0}>
          <Group $mr={20}>
            <ToolButton aria-label="Hand" $w={61}><HandTool /></ToolButton>
            <ToolButton aria-label="Move"><MoveTool /></ToolButton>
            <ToolButton aria-label="Rotate"><RotateTool /></ToolButton>
            <ToolButton aria-label="Scale"><ScaleTool /></ToolButton>
            <ToolButton aria-label="Rect" $on><RectTool /></ToolButton>
            <ToolButton aria-label="Transform"><TransformTool /></ToolButton>
            <ToolButton aria-label="Custom tools"><ToolsIcon /></ToolButton>
          </Group>
          <Group $mr={4}>
            <ToolButton $w={125}><PivotIcon />Pivot</ToolButton>
            <ToolButton $w={127}><LocalIcon />Local</ToolButton>
          </Group>
          <Group $dim>
            <ToolButton $w={61} $off aria-label="Grid snapping"><SnapIcon /></ToolButton>
          </Group>
        </TopSide>
        <Group>
          <ToolButton $w={61} aria-label="Play"><PlayIcon /></ToolButton>
          <ToolButton $w={64} aria-label="Pause"><PauseIcon /></ToolButton>
          <ToolButton $w={64} $off aria-label="Step"><StepIcon /></ToolButton>
        </Group>
        <TopSide $end $gap={20}>
          <Group>
            <ToolButton $w={152}><CollabIcon />Collab<Down /></ToolButton>
          </Group>
          <Group>
            <ToolButton $w={61} aria-label="Cloud"><CloudIcon /></ToolButton>
          </Group>
          <TopSelect><BareSelect aria-label="Account"><option>Account</option></BareSelect><Down /></TopSelect>
          <TopSelect><BareSelect aria-label="Layers"><option>Layers</option></BareSelect><Down /></TopSelect>
          <TopSelect><BareSelect aria-label="Layout"><option>Layout</option></BareSelect><Down /></TopSelect>
        </TopSide>
      </TopBar>
      <Workspace>
        <LeftColumn>
          <UpperRow>
            <Hierarchy />
            <Scene />
          </UpperRow>
          <Console />
        </LeftColumn>
        <Inspector />
      </Workspace>
      <Status>Auto Generate Lighting On</Status>
    </Shell>
  );
}
